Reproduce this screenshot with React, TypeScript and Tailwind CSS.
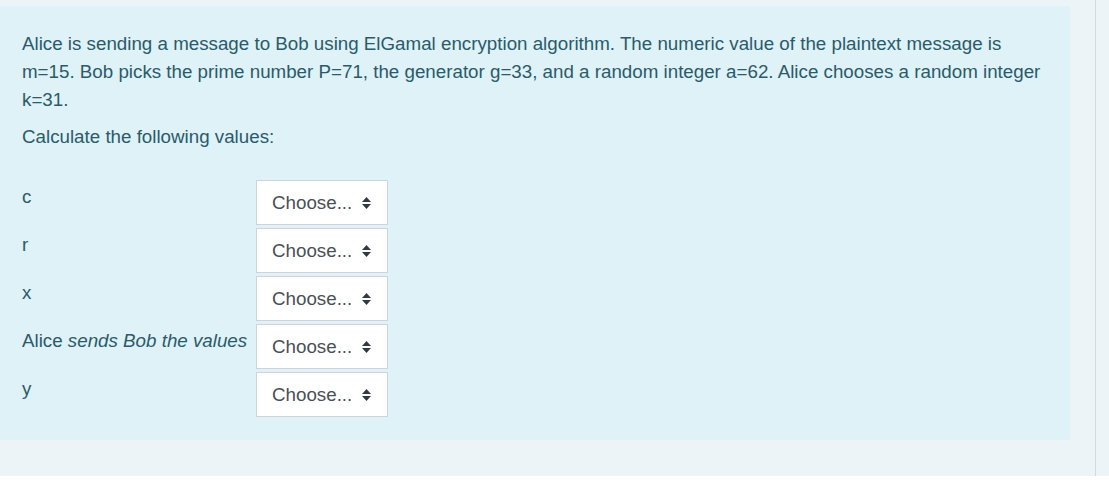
import React from 'react';

const rows: { label: React.ReactNode }[] = [
  { label: 'c' },
  { label: 'r' },
  { label: 'x' },
  {
    label: (
      <>
        Alice <em>sends Bob the values</em>
      </>
    ),
  },
  { label: 'y' },
];

const SortArrows = () => (
  <svg width="11" height="14" viewBox="0 0 11 14" className="shrink-0">
    <path d="M5.5 1 L10 6 L1 6 Z" fill="#343a40" />
    <path d="M5.5 13 L10 8 L1 8 Z" fill="#343a40" />
  </svg>
);

const FakeSelect = () => (
  <div className="flex items-center justify-between w-[132px] h-[45px] bg-white border border-[#ced4da] pl-[15px] pr-[15px] text-[#495057]">
    <span>Choose...</span>
    <SortArrows />
  </div>
);

export default function App() {
  return (
    <div
      className="w-full h-[480px] bg-white text-[18.75px] leading-[28.1px]"
      style={{ fontFamily: '"Liberation Sans", Arial, sans-serif' }}
    >
      <div className="flex h-[476px] bg-[#ecf4f7]">
        <div className="w-[1095px] pt-[6px] pr-[25px]">
          <div className="bg-[#def2f8] text-[#2c5a69] pl-[22px] pr-[22px] pt-[24px] pb-[20px]">
            <p className="mb-[9px]">
              Alice is sending a message to Bob using ElGamal encryption algorithm. The numeric value of the
              plaintext message is m=15. Bob picks the prime number P=71, the generator g=33, and a random integer
              a=62. Alice chooses a random integer k=31.
            </p>
            <p>Calculate the following values:</p>
            <table className="mt-[29px] border-separate border-spacing-0">
              <tbody>
                {rows.map((row, i) => (
                  <tr key={i}>
                    <td className="align-top pt-[3px] pr-[8px] w-[234px] whitespace-nowrap">{row.label}</td>
                    <td className="align-top pb-[3px]">
                      <FakeSelect />
                    </td>
                  </tr>
                ))}
              </tbody>
            </table>
          </div>
        </div>
        <div className="flex-1 border-l border-[#d3dadd]" />
      </div>
    </div>
  );
}
